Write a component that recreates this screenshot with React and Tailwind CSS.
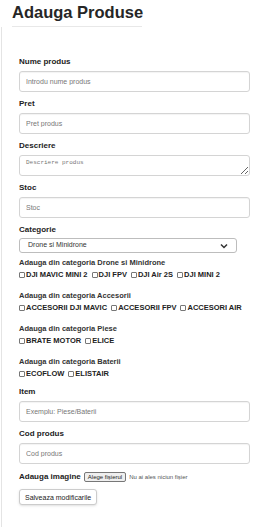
const categorii = [
  {
    titlu: 'Adauga din categoria Drone si Minidrone',
    items: ['DJI MAVIC MINI 2', 'DJI FPV', 'DJI Air 2S', 'DJI MINI 2'],
  },
  {
    titlu: 'Adauga din categoria Accesorii',
    items: ['ACCESORII DJI MAVIC', 'ACCESORII FPV', 'ACCESORI AIR'],
  },
  { titlu: 'Adauga din categoria Piese', items: ['BRATE MOTOR', 'ELICE'] },
  { titlu: 'Adauga din categoria Baterii', items: ['ECOFLOW', 'ELISTAIR'] },
];

const Field = ({ label, placeholder }) => (
  <div className="mb-[7px]">
    <label className="block text-[8px] font-bold text-[#222] mb-[4px] leading-[10px]">
      {label}
    </label>
    <input
      className="block w-[231px] h-[21px] border border-[#d4d4d4] rounded-[3px] px-[6px] text-[7px] leading-[9px] text-[#555] placeholder:text-[#777] shadow-[inset_0_1px_1px_rgba(0,0,0,0.05)]"
      placeholder={placeholder}
    />
  </div>
);

const App = () => {
  return (
    <div className="w-[270px] h-[527px] overflow-hidden bg-white font-['Liberation_Sans',Arial,sans-serif] text-[#222]">
      <div className="px-[12px] pt-[2px]">
        <h1 className="text-[16.5px] font-bold leading-[20px] text-[#262626]">Adauga Produse</h1>
        <div className="w-[130px] border-b border-[#e8e8e8] mt-[4px]" />
      </div>

      <div className="border-l border-[#e4e4e4] ml-[1px] h-[500px] pl-[17px] pt-[30px]">
        <Field label="Nume produs" placeholder="Introdu nume produs" />
        <Field label="Pret" placeholder="Pret produs" />
        <div className="mb-[7px]">
          <label className="block text-[8px] font-bold mb-[4px] leading-[10px]">Descriere</label>
          <textarea
            className="block w-[231px] h-[21px] border border-[#d4d4d4] rounded-[3px] px-[6px] py-[3px] text-[6px] leading-[8px] font-['Liberation_Mono',monospace] placeholder:text-[#777] resize-y"
            placeholder="Descriere produs"
          />
        </div>
        <Field label="Stoc" placeholder="Stoc" />

        <div className="mb-[5px]">
          <label className="block text-[8px] font-bold mb-[3px] leading-[10px]">Categorie</label>
          <div className="w-[218px] h-[15px] border border-[#bdbdbd] rounded-[3px] flex items-center justify-between px-[8px]">
            <span className="text-[7px] text-[#333]">Drone si Minidrone</span>
            <svg width="8" height="6" viewBox="0 0 8 6">
              <path d="M1 1.5 L4 4.5 L7 1.5" fill="none" stroke="#333" strokeWidth="1.5" />
            </svg>
          </div>
        </div>

        <div className="flex flex-col gap-[11px] mb-[8px]">
          {categorii.map((c) => (
            <div key={c.titlu}>
              <div className="text-[7.5px] font-bold text-[#333] leading-[10px] mb-[2px]">{c.titlu}</div>
              <div className="flex gap-[4px] text-[7.5px] font-bold text-[#222] leading-[10px]">
                {c.items.map((it) => (
                  <span key={it} className="flex items-center gap-[1px] whitespace-nowrap">
                    <span className="inline-block w-[6px] h-[6px] border border-[#777] rounded-[1px]" />
                    {it}
                  </span>
                ))}
              </div>
            </div>
          ))}
        </div>

        <Field label="Item" placeholder="Exemplu: Piese/Baterii" />
        <Field label="Cod produs" placeholder="Cod produs" />

        <div className="flex items-center gap-[3px] h-[12px] mb-[6px]">
          <span className="text-[8px] font-bold">Adauga imagine</span>
          <span className="border border-[#777] bg-[#efefef] rounded-[2px] px-[3px] text-[6px] leading-[8px]">
            Alege fișierul
          </span>
          <span className="text-[6px] text-[#555]">Nu ai ales niciun fișier</span>
        </div>

        <button className="block border border-[#ccc] rounded-[3px] bg-white px-[5px] h-[16px] text-[7px] leading-[9px] text-[#222] shadow-sm">
          Salveaza modificarile
        </button>
      </div>
    </div>
  );
};

export default App;
